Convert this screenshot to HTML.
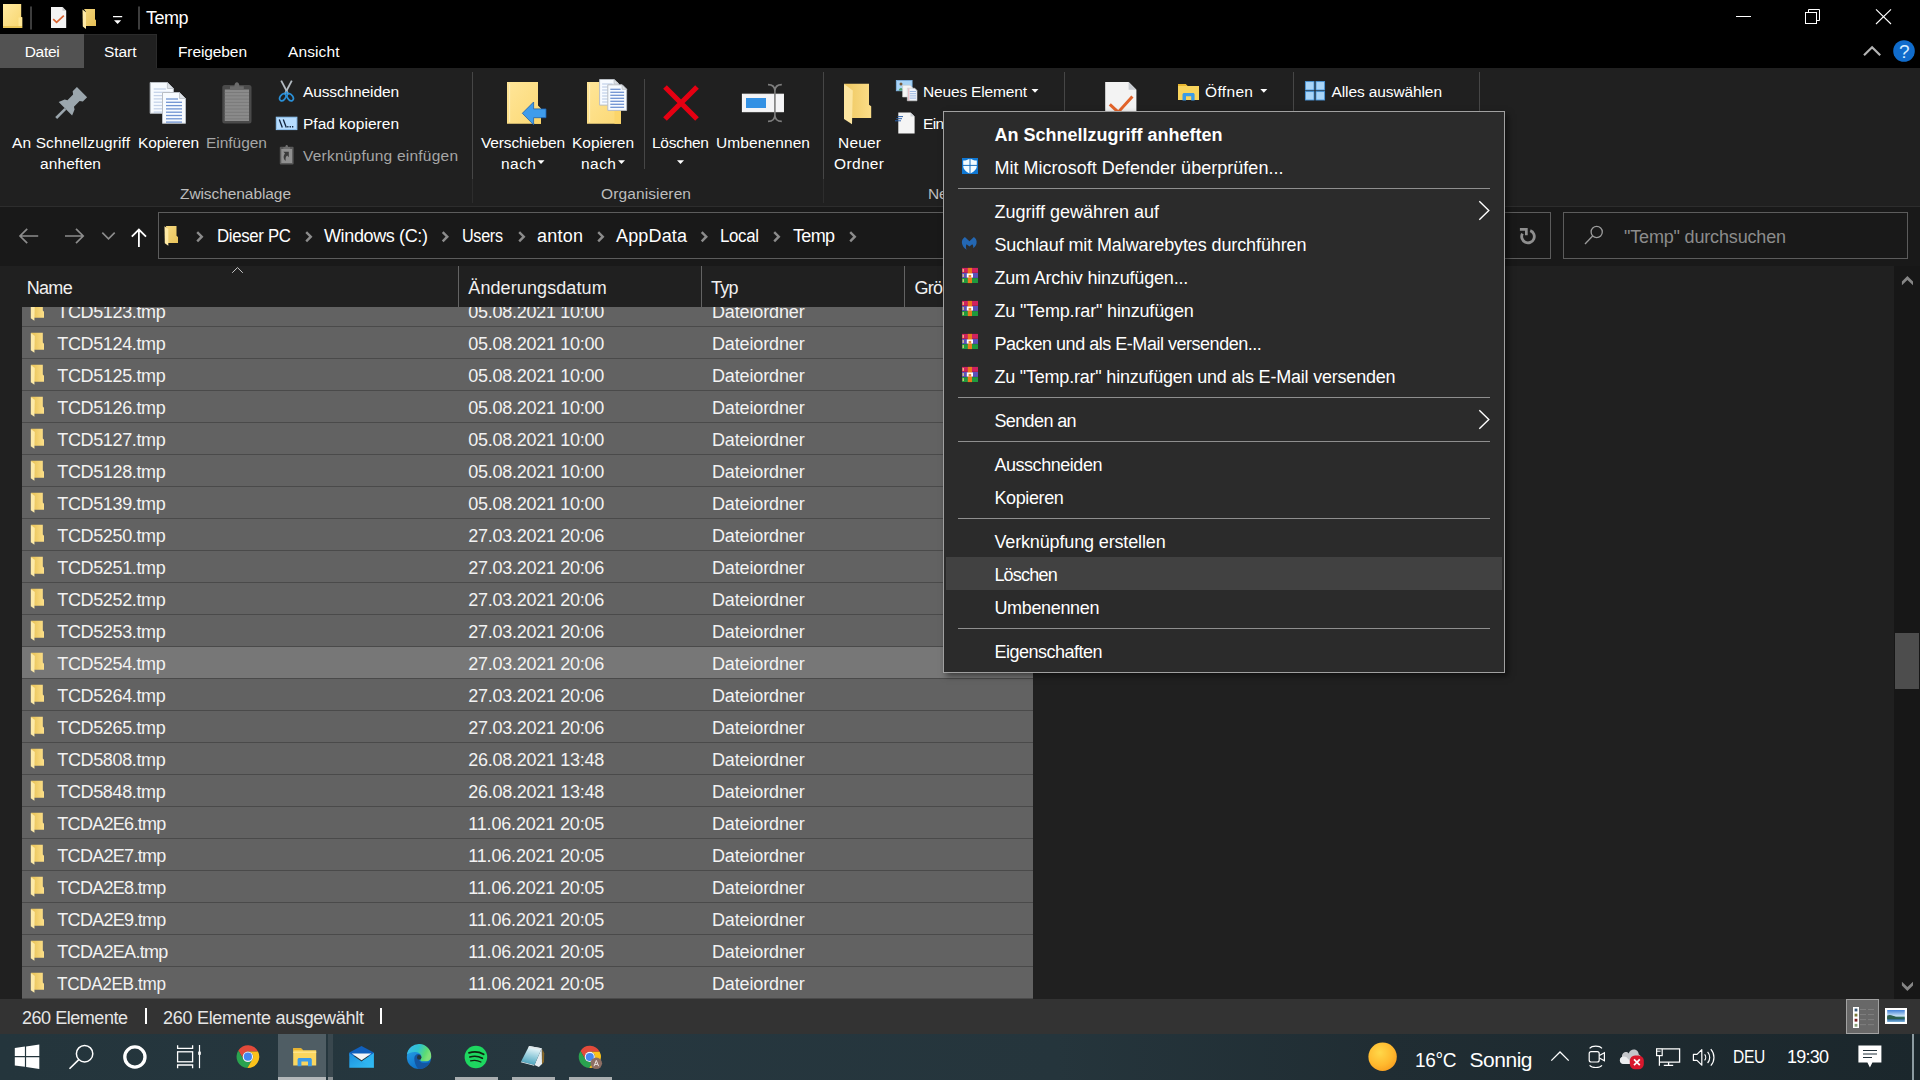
<!DOCTYPE html>
<html lang="de"><head><meta charset="utf-8"><title>Temp</title>
<style>html,body{margin:0;padding:0}body{width:1920px;height:1080px;position:relative;overflow:hidden;background:#202020;font-family:'Liberation Sans',sans-serif;}svg{overflow:visible}</style></head>
<body>
<div style="position:absolute;left:0px;top:0px;width:1920px;height:34px;background:#000;"></div>
<div style="position:absolute;left:0px;top:34px;width:1920px;height:34px;background:#000;"></div>
<div style="position:absolute;left:0px;top:34px;width:84px;height:34px;background:#525252;"></div>
<div style="position:absolute;left:84px;top:34px;width:73px;height:34px;background:#202020;"></div>
<div style="position:absolute;left:84px;top:34px;width:73px;height:1px;background:#2b2b2b;"></div>
<div style="position:absolute;left:156px;top:34px;width:1px;height:34px;background:#2b2b2b;"></div>
<div style="position:absolute;left:0px;top:68px;width:1920px;height:138px;background:#202020;"></div>
<div style="position:absolute;left:0px;top:206px;width:1920px;height:60px;background:#191919;"></div>
<div style="position:absolute;left:0px;top:266px;width:1920px;height:733px;background:#202020;"></div>
<div style="position:absolute;left:1894px;top:266px;width:26px;height:733px;background:#171717;"></div>
<div style="position:absolute;left:0px;top:999px;width:1920px;height:35px;background:#333333;"></div>
<div style="position:absolute;left:0px;top:1034px;width:1920px;height:46px;background:#21313a;background:linear-gradient(90deg,#24353c 0%,#26373f 30%,#25353c 55%,#202d33 72%,#1b272c 100%);"></div>
<svg style="position:absolute;left:3px;top:4px;" width="20" height="25" viewBox="0 0 20 25"><defs><linearGradient id="tf" x1="0" y1="0" x2="1" y2="1"><stop offset="0" stop-color="#ffe9a0"/><stop offset="1" stop-color="#f7d56d"/></linearGradient></defs><path d="M0 0H18.2V13H19.2V24H0Z" fill="url(#tf)"/><path d="M15.5 13.5H19.2V22H15.5Z" fill="#ffe794"/><path d="M0 22H19.2V24H0Z" fill="#e9c558"/></svg>
<div style="position:absolute;left:29.5px;top:6px;width:2.6px;height:23.5px;box-sizing:border-box;border:1px solid #3d3d3d;border-radius:1.3px"></div>
<div style="position:absolute;left:137.5px;top:6px;width:2.6px;height:23.5px;box-sizing:border-box;border:1px solid #3d3d3d;border-radius:1.3px"></div>
<svg style="position:absolute;left:51px;top:7px;" width="16" height="22" viewBox="0 0 16 22"><path d="M0 0H11.5L15.2 3.8V21H0Z" fill="#f3f3f3"/><path d="M11.5 0V3.8H15.2Z" fill="#c9c9c9"/><path d="M2.2 12.2L5.6 15.4L12.8 8.6" fill="none" stroke="#d9622f" stroke-width="1.7"/></svg>
<svg style="position:absolute;left:82px;top:9px;" width="15" height="21" viewBox="0 0 15 21"><defs><linearGradient id="sf" x1="0" y1="0" x2="1" y2="1"><stop offset="0" stop-color="#f3d67c"/><stop offset="1" stop-color="#e6bf55"/></linearGradient></defs><path d="M2 0H13V10.2L14 11.2V17H4V3Z" fill="url(#sf)"/><path d="M0.5 0.5L4 3.2V20L0.8 17.5Z" fill="#ffe9a3"/></svg>
<svg style="position:absolute;left:113px;top:16px;" width="10" height="9" viewBox="0 0 10 9"><path d="M0 0H9.2V1.2H0Z M1 4.2H8.2L4.6 8Z" fill="#fff"/></svg>
<span style="position:absolute;left:146px;top:9.00px;font-size:18px;line-height:1;letter-spacing:-0.539px;color:#fff;white-space:pre;">Temp</span>
<svg style="position:absolute;left:0;top:0" width="1920" height="70"><path d="M1736 16.5H1751" stroke="#fff" stroke-width="1"/><path d="M1808.5 12.5V9.5H1819.5V20.5H1816.5" fill="none" stroke="#fff" stroke-width="1"/><rect x="1805.5" y="12.5" width="11" height="11" fill="none" stroke="#fff" stroke-width="1"/><path d="M1876 9.3L1891 24M1891 9.3L1876 24" stroke="#fff" stroke-width="1.1"/><path d="M1864 55.2L1872.1 47.2L1880.2 55.2" fill="none" stroke="#b4b4b4" stroke-width="2.2"/><circle cx="1904" cy="51" r="10.8" fill="#106ccc"/></svg>
<span style="position:absolute;left:1898.9px;top:42.00px;font-size:19px;line-height:1;letter-spacing:-0.317px;color:#d6ecff;white-space:pre;">?</span>
<span style="position:absolute;left:24.7px;top:44.00px;font-size:15.5px;line-height:1;letter-spacing:-0.297px;color:#fff;white-space:pre;">Datei</span>
<span style="position:absolute;left:104px;top:44.00px;font-size:15.5px;line-height:1;letter-spacing:-0.059px;color:#fff;white-space:pre;">Start</span>
<span style="position:absolute;left:178px;top:44.00px;font-size:15.5px;line-height:1;letter-spacing:-0.100px;color:#fff;white-space:pre;">Freigeben</span>
<span style="position:absolute;left:288px;top:44.00px;font-size:15.5px;line-height:1;letter-spacing:0.109px;color:#fff;white-space:pre;">Ansicht</span>
<span style="position:absolute;left:12px;top:135.00px;font-size:15.5px;line-height:1;letter-spacing:0.123px;color:#fff;white-space:pre;">An Schnellzugriff</span>
<span style="position:absolute;left:40px;top:156.00px;font-size:15.5px;line-height:1;letter-spacing:0.094px;color:#fff;white-space:pre;">anheften</span>
<span style="position:absolute;left:138px;top:135.00px;font-size:15.5px;line-height:1;letter-spacing:-0.150px;color:#fff;white-space:pre;">Kopieren</span>
<span style="position:absolute;left:206px;top:135.00px;font-size:15.5px;line-height:1;letter-spacing:-0.029px;color:#a6a6a6;white-space:pre;">Einfügen</span>
<span style="position:absolute;left:303px;top:84.00px;font-size:15.5px;line-height:1;letter-spacing:-0.125px;color:#fff;white-space:pre;">Ausschneiden</span>
<span style="position:absolute;left:303px;top:116.00px;font-size:15.5px;line-height:1;letter-spacing:0.029px;color:#fff;white-space:pre;">Pfad kopieren</span>
<span style="position:absolute;left:303px;top:148.00px;font-size:15.5px;line-height:1;letter-spacing:0.220px;color:#a6a6a6;white-space:pre;">Verknüpfung einfügen</span>
<span style="position:absolute;left:180px;top:186.00px;font-size:15.5px;line-height:1;letter-spacing:-0.078px;color:#bdbdbd;white-space:pre;">Zwischenablage</span>
<span style="position:absolute;left:481px;top:135.00px;font-size:15.5px;line-height:1;letter-spacing:-0.131px;color:#fff;white-space:pre;">Verschieben</span>
<span style="position:absolute;left:501px;top:156.00px;font-size:15.5px;line-height:1;letter-spacing:0.458px;color:#fff;white-space:pre;">nach</span>
<span style="position:absolute;left:572px;top:135.00px;font-size:15.5px;line-height:1;letter-spacing:-0.007px;color:#fff;white-space:pre;">Kopieren</span>
<span style="position:absolute;left:581px;top:156.00px;font-size:15.5px;line-height:1;letter-spacing:0.458px;color:#fff;white-space:pre;">nach</span>
<span style="position:absolute;left:652px;top:135.00px;font-size:15.5px;line-height:1;letter-spacing:-0.268px;color:#fff;white-space:pre;">Löschen</span>
<span style="position:absolute;left:716px;top:135.00px;font-size:15.5px;line-height:1;letter-spacing:0.102px;color:#fff;white-space:pre;">Umbenennen</span>
<span style="position:absolute;left:601px;top:186.00px;font-size:15.5px;line-height:1;letter-spacing:0.114px;color:#bdbdbd;white-space:pre;">Organisieren</span>
<span style="position:absolute;left:838px;top:135.00px;font-size:15.5px;line-height:1;letter-spacing:0.195px;color:#fff;white-space:pre;">Neuer</span>
<span style="position:absolute;left:834px;top:156.00px;font-size:15.5px;line-height:1;letter-spacing:0.350px;color:#fff;white-space:pre;">Ordner</span>
<span style="position:absolute;left:923px;top:84.00px;font-size:15.5px;line-height:1;letter-spacing:-0.165px;color:#fff;white-space:pre;">Neues Element</span>
<span style="position:absolute;left:923px;top:116.00px;font-size:15.5px;line-height:1;letter-spacing:-0.703px;color:#fff;white-space:pre;">Ein</span>
<span style="position:absolute;left:928px;top:186.00px;font-size:15.5px;line-height:1;letter-spacing:-0.258px;color:#bdbdbd;white-space:pre;">Neu</span>
<span style="position:absolute;left:1205px;top:84.00px;font-size:15.5px;line-height:1;letter-spacing:0.347px;color:#fff;white-space:pre;">Öffnen</span>
<span style="position:absolute;left:1331.5px;top:84.00px;font-size:15.5px;line-height:1;letter-spacing:-0.108px;color:#fff;white-space:pre;">Alles auswählen</span>
<svg style="position:absolute;left:0;top:0" width="100" height="130"><polygon points="58.67,102.09 72.11,115.53 74.58,109.51 73.95,106.76 79.61,101.10 82.86,101.52 87.10,97.28 76.92,87.10 72.68,91.34 73.10,94.59 67.44,100.25 64.69,99.62" fill="#9ba6ad"/><polygon points="55.28,117.08 57.12,118.92 66.31,109.73 64.47,107.89" fill="#9ba6ad"/></svg>
<svg style="position:absolute;left:0;top:0" width="260" height="130"><path d="M150.2 82.5H167.39999999999998L173.39999999999998 88.5V113.3H150.2Z" fill="#f7fbff" stroke="#b9bec4" stroke-width="1"/><path d="M167.39999999999998 82.5V88.5H173.39999999999998Z" fill="#dfe3e8" stroke="#b9bec4" stroke-width="0.8"/><path d="M153.7 89.00H165.89999999999998" stroke="#c5d3ea" stroke-width="1.3"/><path d="M153.7 92.30H169.89999999999998" stroke="#c5d3ea" stroke-width="1.3"/><path d="M153.7 95.60H169.89999999999998" stroke="#c5d3ea" stroke-width="1.3"/><path d="M153.7 98.90H169.89999999999998" stroke="#c5d3ea" stroke-width="1.3"/><path d="M153.7 102.20H169.89999999999998" stroke="#c5d3ea" stroke-width="1.3"/><path d="M153.7 105.50H169.89999999999998" stroke="#c5d3ea" stroke-width="1.3"/><path d="M153.7 108.80H169.89999999999998" stroke="#c5d3ea" stroke-width="1.3"/><path d="M153.7 112.10H169.89999999999998" stroke="#c5d3ea" stroke-width="1.3"/><path d="M162.5 92.5H179.5L185.5 98.5V123.3H162.5Z" fill="#f7fbff" stroke="#b9bec4" stroke-width="1"/><path d="M179.5 92.5V98.5H185.5Z" fill="#dfe3e8" stroke="#b9bec4" stroke-width="0.8"/><path d="M166.0 99.00H178.0" stroke="#6f93d2" stroke-width="1.3"/><path d="M166.0 102.30H182.0" stroke="#6f93d2" stroke-width="1.3"/><path d="M166.0 105.60H182.0" stroke="#6f93d2" stroke-width="1.3"/><path d="M166.0 108.90H182.0" stroke="#6f93d2" stroke-width="1.3"/><path d="M166.0 112.20H182.0" stroke="#6f93d2" stroke-width="1.3"/><path d="M166.0 115.50H182.0" stroke="#6f93d2" stroke-width="1.3"/><path d="M166.0 118.80H182.0" stroke="#6f93d2" stroke-width="1.3"/><path d="M166.0 122.10H182.0" stroke="#6f93d2" stroke-width="1.3"/></svg>
<svg style="position:absolute;left:0;top:0" width="260" height="130"><rect x="222.3" y="85" width="29.2" height="38.6" rx="2.5" fill="#4a4a4a"/><rect x="224.8" y="89.5" width="24.2" height="31.5" fill="#8a8a8a"/><path d="M224.8 92.5H249" stroke="#7a7a7a" stroke-width="1"/><path d="M224.8 95.8H249" stroke="#7a7a7a" stroke-width="1"/><path d="M224.8 99.1H249" stroke="#7a7a7a" stroke-width="1"/><path d="M224.8 102.4H249" stroke="#7a7a7a" stroke-width="1"/><path d="M224.8 105.7H249" stroke="#7a7a7a" stroke-width="1"/><path d="M224.8 109.0H249" stroke="#7a7a7a" stroke-width="1"/><path d="M224.8 112.3H249" stroke="#7a7a7a" stroke-width="1"/><path d="M224.8 115.6H249" stroke="#7a7a7a" stroke-width="1"/><path d="M224.8 118.9H249" stroke="#7a7a7a" stroke-width="1"/><path d="M230 89.8V86.2H234.4C234.4 83.8 235.6 82.3 236.9 82.3C238.2 82.3 239.4 83.8 239.4 86.2H243.8V89.8Z" fill="#6a6a6a"/></svg>
<svg style="position:absolute;left:0;top:0" width="320" height="180"><path d="M281.2 80.6L288.2 94" stroke="#b4bcc3" stroke-width="1.8" fill="none"/><path d="M291.8 80.6L284.8 94" stroke="#b4bcc3" stroke-width="1.8" fill="none"/><ellipse cx="282.8" cy="97.3" rx="2.6" ry="3.9" transform="rotate(35 282.8 97.3)" fill="none" stroke="#2a90d8" stroke-width="1.7"/><ellipse cx="290.2" cy="97.3" rx="2.6" ry="3.9" transform="rotate(-35 290.2 97.3)" fill="none" stroke="#2a90d8" stroke-width="1.7"/><circle cx="286.5" cy="92.6" r="1.3" fill="#2a90d8"/><rect x="276.3" y="117.2" width="20.6" height="12.4" fill="#b6dcfe" stroke="#8fc4f2" stroke-width="1"/><path d="M279.3 119.5L282.3 127.5M283.3 119.5L286.3 127.5" stroke="#10233d" stroke-width="1.3"/><path d="M287.2 126.8h1.3M289.6 126.8h1.3M292 126.8h1.3" stroke="#10233d" stroke-width="1.4"/><rect x="279.8" y="146.8" width="13.8" height="17.6" rx="1" fill="#5a5a5a"/><rect x="281.3" y="149" width="10.8" height="14" fill="#8f8f8f"/><path d="M283.3 149V147H285.4C285.4 145.6 286 145 286.7 145C287.4 145 288 145.6 288 147H290.1V149Z" fill="#6e6e6e"/><path d="M283.4 151.8H288.8V157.2L287.2 155.6C285.6 157 285.2 158.6 285.9 160.8C283.2 159 283 156.2 285 153.4Z" fill="#3a3a3a"/></svg>
<svg style="position:absolute;left:0;top:0" width="700" height="130"><defs><linearGradient id="fg" x1="0" y1="0" x2="1" y2="1"><stop offset="0" stop-color="#ffe699"/><stop offset="1" stop-color="#fbd874"/></linearGradient></defs><path d="M507 82H538V105.5L541 108.5V123.8H507Z" fill="url(#fg)"/><path d="M509.6 84V122" stroke="#fff0bb" stroke-width="1"/><path d="M534.5 108.5H541V123.8H534.5Z" fill="#fbd56a"/><path d="M522.3 113.3L533.6 102V108.9H546V117.7H533.6V124.8Z" fill="#3f9ceb" stroke="#1d61ad" stroke-width="0.8"/><path d="M587 82H618V105.5L621 108.5V123.8H587Z" fill="url(#fg)"/><path d="M589.6 84V122" stroke="#fff0bb" stroke-width="1"/><path d="M614.5 108.5H621V123.8H614.5Z" fill="#fbd56a"/><path d="M599.6 79.5H614.1L618.6 84.0V105.1H599.6Z" fill="#f7fbff" stroke="#b9bec4" stroke-width="1"/><path d="M614.1 79.5V84.0H618.6Z" fill="#dfe3e8" stroke="#b9bec4" stroke-width="0.8"/><path d="M602.1 84.00H612.6" stroke="#c5d3ea" stroke-width="1.3"/><path d="M602.1 87.00H616.1" stroke="#c5d3ea" stroke-width="1.3"/><path d="M602.1 90.00H616.1" stroke="#c5d3ea" stroke-width="1.3"/><path d="M602.1 93.00H616.1" stroke="#c5d3ea" stroke-width="1.3"/><path d="M602.1 96.00H616.1" stroke="#c5d3ea" stroke-width="1.3"/><path d="M602.1 99.00H616.1" stroke="#c5d3ea" stroke-width="1.3"/><path d="M602.1 102.00H616.1" stroke="#c5d3ea" stroke-width="1.3"/><path d="M607.8 84.8H622.0999999999999L626.5999999999999 89.3V110.4H607.8Z" fill="#f7fbff" stroke="#b9bec4" stroke-width="1"/><path d="M622.0999999999999 84.8V89.3H626.5999999999999Z" fill="#dfe3e8" stroke="#b9bec4" stroke-width="0.8"/><path d="M610.3 89.30H620.5999999999999" stroke="#6f93d2" stroke-width="1.3"/><path d="M610.3 92.30H624.0999999999999" stroke="#6f93d2" stroke-width="1.3"/><path d="M610.3 95.30H624.0999999999999" stroke="#6f93d2" stroke-width="1.3"/><path d="M610.3 98.30H624.0999999999999" stroke="#6f93d2" stroke-width="1.3"/><path d="M610.3 101.30H624.0999999999999" stroke="#6f93d2" stroke-width="1.3"/><path d="M610.3 104.30H624.0999999999999" stroke="#6f93d2" stroke-width="1.3"/><path d="M610.3 107.30H624.0999999999999" stroke="#6f93d2" stroke-width="1.3"/></svg>
<svg style="position:absolute;left:0;top:0" width="900" height="140"><path d="M665 87L697 119M697 87L665 119" stroke="#e60012" stroke-width="5.2"/><rect x="742.4" y="94.2" width="41" height="17.5" fill="#f4f4f6" stroke="#fff" stroke-width="1"/><rect x="746" y="98" width="20" height="10" fill="#3391e4"/><path d="M768 84.6C772.5 84.6 774.9 87 774.9 91V115C774.9 119 772.5 121.4 768 121.4M781.8 84.6C777.3 84.6 774.9 87 774.9 91M774.9 115C774.9 119 777.3 121.4 781.8 121.4" fill="none" stroke="#7d7d7d" stroke-width="1.6"/><defs><linearGradient id="nf" x1="0" y1="0" x2="1" y2="0"><stop offset="0" stop-color="#eec760"/><stop offset="1" stop-color="#fbdd88"/></linearGradient></defs><path d="M844 83.8H869V104.7L871.2 106.3V118H851Z" fill="url(#nf)"/><path d="M844 84L852.8 90.6L852 124.3L844 118.9Z" fill="#fce5a0"/></svg>
<svg style="position:absolute;left:0;top:0" width="960" height="140"><rect x="896.3" y="80.5" width="15.8" height="10.3" fill="#a9d4f6" stroke="#7fb5e6" stroke-width="0.8"/><circle cx="901" cy="84" r="1.5" fill="#7a5a3a"/><path d="M898.8 90.5C898.8 87 903.2 87 903.2 90.5Z" fill="#4da06a"/><path d="M902.6 85.2H910L912.4 87.6V97H902.6Z" fill="#f5f5f5" stroke="#c9c9c9" stroke-width="0.6"/><path d="M907.3 88.2H914.8L917 90.4V100.8H907.3Z" fill="#eef3fb" stroke="#c9c9c9" stroke-width="0.6"/><path d="M908.8 88.5V100.5" stroke="#e79aa0" stroke-width="0.8"/><path d="M909.8 91.5H916" stroke="#9db8df" stroke-width="1"/><path d="M909.8 93.7H916" stroke="#9db8df" stroke-width="1"/><path d="M909.8 95.9H916" stroke="#9db8df" stroke-width="1"/><path d="M909.8 98.1H916" stroke="#9db8df" stroke-width="1"/><path d="M898.3 112.5H910.5L914.6 116.6V133.5H898.3Z" fill="#f5f5f5"/><path d="M910.5 112.5V116.6H914.6Z" fill="#cfd3d8"/><path d="M897.5 116.6H903M896.3 118.7H902M895 120.8H901" stroke="#2a5fa8" stroke-width="1"/></svg>
<svg style="position:absolute;left:0;top:0" width="1500" height="210"><path d="M537.5 160.3h7l-3.5 3.8z" fill="#fff"/><path d="M618 160.3h7l-3.5 3.8z" fill="#fff"/><path d="M677 160.3h7l-3.5 3.8z" fill="#fff"/><path d="M1031.5 89h7l-3.5 3.8z" fill="#fff"/><path d="M1260.3 89h7l-3.5 3.8z" fill="#fff"/><path d="M1105.2 82H1128.6L1136.4 89.8V112H1105.2Z" fill="#f3f3f3"/><path d="M1128.6 82V89.8H1136.4Z" fill="#c9cdd2"/><path d="M1109.8 104.3L1118.2 112.2L1132.4 96.6" fill="none" stroke="#e2632a" stroke-width="3"/><path d="M1178 84H1185.5L1187.5 86H1199V100H1178Z" fill="#f9d45c"/><path d="M1178 84H1185.5L1187.5 86H1178Z" fill="#e8b62f"/><path d="M1182.5 100.6V94.6C1182.5 93.6 1183.3 93 1184.2 93H1193C1193.9 93 1194.6 93.6 1194.6 94.6V100.6H1191.2V96.2H1186V100.6Z" fill="#3b9be6"/><rect x="1305.4" y="81.6" width="8.6" height="8.4" fill="#a9d5f8" stroke="#4a98de" stroke-width="0.9"/><rect x="1305.4" y="91.6" width="8.6" height="8.4" fill="#a9d5f8" stroke="#4a98de" stroke-width="0.9"/><rect x="1316" y="81.6" width="8.6" height="8.4" fill="#a9d5f8" stroke="#4a98de" stroke-width="0.9"/><rect x="1316" y="91.6" width="8.6" height="8.4" fill="#a9d5f8" stroke="#4a98de" stroke-width="0.9"/></svg>
<div style="position:absolute;left:472px;top:72px;width:1px;height:107px;background:#464646;"></div>
<div style="position:absolute;left:472px;top:179px;width:1px;height:24px;background:#2d2d2d;"></div>
<div style="position:absolute;left:823px;top:72px;width:1px;height:107px;background:#464646;"></div>
<div style="position:absolute;left:823px;top:179px;width:1px;height:24px;background:#2d2d2d;"></div>
<div style="position:absolute;left:1064px;top:72px;width:1px;height:107px;background:#464646;"></div>
<div style="position:absolute;left:1064px;top:179px;width:1px;height:24px;background:#2d2d2d;"></div>
<div style="position:absolute;left:1293px;top:72px;width:1px;height:107px;background:#464646;"></div>
<div style="position:absolute;left:1293px;top:179px;width:1px;height:24px;background:#2d2d2d;"></div>
<div style="position:absolute;left:1479px;top:72px;width:1px;height:107px;background:#464646;"></div>
<div style="position:absolute;left:1479px;top:179px;width:1px;height:24px;background:#2d2d2d;"></div>
<div style="position:absolute;left:644px;top:79px;width:1px;height:90px;background:#464646;"></div>
<div style="position:absolute;left:158px;top:212px;width:1393px;height:47px;background:#191919;box-sizing:border-box;border:1px solid #5c5c5c;"></div>
<div style="position:absolute;left:1563px;top:212px;width:345px;height:47px;background:#191919;box-sizing:border-box;border:1px solid #5c5c5c;"></div>
<div style="position:absolute;left:0px;top:206px;width:1920px;height:1px;background:#2d2d2d;"></div>
<svg style="position:absolute;left:0;top:0" width="1920" height="270"><path d="M38.2 236H20.2M27.2 228.8L20 236L27.2 243.2" fill="none" stroke="#8c8c8c" stroke-width="1.7"/><path d="M65 236H83M76 228.8L83.2 236L76 243.2" fill="none" stroke="#8c8c8c" stroke-width="1.7"/><path d="M102.3 232.6L108.5 238.8L114.7 232.6" fill="none" stroke="#8c8c8c" stroke-width="1.6"/><path d="M138.9 247V229.6M131.8 236.6L138.9 229.5L146 236.6" fill="none" stroke="#fff" stroke-width="1.8"/><defs><linearGradient id="af" x1="0" y1="0" x2="1" y2="1"><stop offset="0" stop-color="#f6d981"/><stop offset="1" stop-color="#e9c35a"/></linearGradient></defs><path d="M166 226H176.5V235.8L178 237V243H168Z" fill="url(#af)"/><path d="M164.5 226.2L168.3 229V245.8L164.8 243.2Z" fill="#ffeaa6"/><path d="M197.2 232.1L201.8 236.7L197.2 241.3" fill="none" stroke="#8c8c8c" stroke-width="2.4"/><path d="M306.2 232.1L310.8 236.7L306.2 241.3" fill="none" stroke="#8c8c8c" stroke-width="2.4"/><path d="M442.7 232.1L447.3 236.7L442.7 241.3" fill="none" stroke="#8c8c8c" stroke-width="2.4"/><path d="M519.2 232.1L523.8 236.7L519.2 241.3" fill="none" stroke="#8c8c8c" stroke-width="2.4"/><path d="M598.2 232.1L602.8 236.7L598.2 241.3" fill="none" stroke="#8c8c8c" stroke-width="2.4"/><path d="M701.7 232.1L706.3 236.7L701.7 241.3" fill="none" stroke="#8c8c8c" stroke-width="2.4"/><path d="M774.2 232.1L778.8 236.7L774.2 241.3" fill="none" stroke="#8c8c8c" stroke-width="2.4"/><path d="M850.2 232.1L854.8 236.7L850.2 241.3" fill="none" stroke="#8c8c8c" stroke-width="2.4"/><path d="M1530.2 230.6A6.3 6.3 0 1 1 1522.4 233.6" fill="none" stroke="#8f8f8f" stroke-width="2.8"/><path d="M1519.9 228H1527.7V235.2H1525V230.7H1519.9Z" fill="#8f8f8f"/><circle cx="1596.7" cy="232" r="5.6" fill="none" stroke="#9c9c9c" stroke-width="1.3"/><path d="M1592.6 236L1585 244" stroke="#9c9c9c" stroke-width="1.3"/></svg>
<span style="position:absolute;left:217px;top:227.00px;font-size:18px;line-height:1;letter-spacing:-0.350px;color:#fff;white-space:pre;transform:scaleX(0.9340);transform-origin:0 0;">Dieser PC</span>
<span style="position:absolute;left:324px;top:227.00px;font-size:18px;line-height:1;letter-spacing:-0.365px;color:#fff;white-space:pre;">Windows (C:)</span>
<span style="position:absolute;left:462px;top:227.00px;font-size:18px;line-height:1;letter-spacing:-0.350px;color:#fff;white-space:pre;transform:scaleX(0.8988);transform-origin:0 0;">Users</span>
<span style="position:absolute;left:537px;top:227.00px;font-size:18px;line-height:1;letter-spacing:0.238px;color:#fff;white-space:pre;">anton</span>
<span style="position:absolute;left:616px;top:227.00px;font-size:18px;line-height:1;letter-spacing:0.156px;color:#fff;white-space:pre;">AppData</span>
<span style="position:absolute;left:720px;top:227.00px;font-size:18px;line-height:1;letter-spacing:-0.350px;color:#fff;white-space:pre;transform:scaleX(0.9368);transform-origin:0 0;">Local</span>
<span style="position:absolute;left:793px;top:227.00px;font-size:18px;line-height:1;letter-spacing:-0.672px;color:#fff;white-space:pre;">Temp</span>
<span style="position:absolute;left:1624px;top:228.00px;font-size:18px;line-height:1;letter-spacing:-0.169px;color:#8c8c8c;white-space:pre;">"Temp" durchsuchen</span>
<span style="position:absolute;left:26.7px;top:279.00px;font-size:18px;line-height:1;letter-spacing:-0.672px;color:#f0f0f0;white-space:pre;">Name</span>
<span style="position:absolute;left:468.3px;top:279.00px;font-size:18px;line-height:1;letter-spacing:0.100px;color:#f0f0f0;white-space:pre;">Änderungsdatum</span>
<span style="position:absolute;left:711px;top:279.00px;font-size:18px;line-height:1;letter-spacing:-0.808px;color:#f0f0f0;white-space:pre;">Typ</span>
<span style="position:absolute;left:914.5px;top:279.00px;font-size:18px;line-height:1;letter-spacing:-0.758px;color:#f0f0f0;white-space:pre;">Grö</span>
<div style="position:absolute;left:458px;top:266px;width:1px;height:41px;background:#636363;"></div>
<div style="position:absolute;left:701px;top:266px;width:1px;height:41px;background:#636363;"></div>
<div style="position:absolute;left:904px;top:266px;width:1px;height:41px;background:#636363;"></div>
<div style="position:absolute;left:0;top:307px;width:1040px;height:692px;overflow:hidden">
<div style="position:absolute;left:22px;top:0px;width:1011px;height:692px;background:#4a4a4a;"></div>
<svg width="0" height="0" style="position:absolute"><defs><linearGradient id="rf" x1="0" y1="0" x2="1" y2="0"><stop offset="0.25" stop-color="#ecc861"/><stop offset="1" stop-color="#fde08a"/></linearGradient></defs></svg>
<div style="position:absolute;left:22px;top:-12px;width:1011px;height:31px;background:#626262;"></div>
<svg style="position:absolute;left:30px;top:-7px;" width="15" height="22" viewBox="0 0 15 22"><path d="M1 0.8H12.8V10.6L14 11.8V17.7H4.2Z" fill="url(#rf)"/><path d="M0.8 1L4.8 4.1L4.4 20.8L0.8 18.3Z" fill="#fdeaa8"/></svg>
<span style="position:absolute;left:57.3px;top:-4.00px;font-size:18px;line-height:1;letter-spacing:-0.365px;color:#f2f2f2;white-space:pre;">TCD5123.tmp</span>
<span style="position:absolute;left:468.3px;top:-4.00px;font-size:18px;line-height:1;letter-spacing:-0.276px;color:#f2f2f2;white-space:pre;">05.08.2021 10:00</span>
<span style="position:absolute;left:712px;top:-4.00px;font-size:18px;line-height:1;letter-spacing:-0.136px;color:#f2f2f2;white-space:pre;">Dateiordner</span>
<div style="position:absolute;left:22px;top:20px;width:1011px;height:31px;background:#626262;"></div>
<svg style="position:absolute;left:30px;top:25px;" width="15" height="22" viewBox="0 0 15 22"><path d="M1 0.8H12.8V10.6L14 11.8V17.7H4.2Z" fill="url(#rf)"/><path d="M0.8 1L4.8 4.1L4.4 20.8L0.8 18.3Z" fill="#fdeaa8"/></svg>
<span style="position:absolute;left:57.3px;top:28.00px;font-size:18px;line-height:1;letter-spacing:-0.365px;color:#f2f2f2;white-space:pre;">TCD5124.tmp</span>
<span style="position:absolute;left:468.3px;top:28.00px;font-size:18px;line-height:1;letter-spacing:-0.276px;color:#f2f2f2;white-space:pre;">05.08.2021 10:00</span>
<span style="position:absolute;left:712px;top:28.00px;font-size:18px;line-height:1;letter-spacing:-0.136px;color:#f2f2f2;white-space:pre;">Dateiordner</span>
<div style="position:absolute;left:22px;top:52px;width:1011px;height:31px;background:#626262;"></div>
<svg style="position:absolute;left:30px;top:57px;" width="15" height="22" viewBox="0 0 15 22"><path d="M1 0.8H12.8V10.6L14 11.8V17.7H4.2Z" fill="url(#rf)"/><path d="M0.8 1L4.8 4.1L4.4 20.8L0.8 18.3Z" fill="#fdeaa8"/></svg>
<span style="position:absolute;left:57.3px;top:60.00px;font-size:18px;line-height:1;letter-spacing:-0.365px;color:#f2f2f2;white-space:pre;">TCD5125.tmp</span>
<span style="position:absolute;left:468.3px;top:60.00px;font-size:18px;line-height:1;letter-spacing:-0.276px;color:#f2f2f2;white-space:pre;">05.08.2021 10:00</span>
<span style="position:absolute;left:712px;top:60.00px;font-size:18px;line-height:1;letter-spacing:-0.136px;color:#f2f2f2;white-space:pre;">Dateiordner</span>
<div style="position:absolute;left:22px;top:84px;width:1011px;height:31px;background:#626262;"></div>
<svg style="position:absolute;left:30px;top:89px;" width="15" height="22" viewBox="0 0 15 22"><path d="M1 0.8H12.8V10.6L14 11.8V17.7H4.2Z" fill="url(#rf)"/><path d="M0.8 1L4.8 4.1L4.4 20.8L0.8 18.3Z" fill="#fdeaa8"/></svg>
<span style="position:absolute;left:57.3px;top:92.00px;font-size:18px;line-height:1;letter-spacing:-0.365px;color:#f2f2f2;white-space:pre;">TCD5126.tmp</span>
<span style="position:absolute;left:468.3px;top:92.00px;font-size:18px;line-height:1;letter-spacing:-0.276px;color:#f2f2f2;white-space:pre;">05.08.2021 10:00</span>
<span style="position:absolute;left:712px;top:92.00px;font-size:18px;line-height:1;letter-spacing:-0.136px;color:#f2f2f2;white-space:pre;">Dateiordner</span>
<div style="position:absolute;left:22px;top:116px;width:1011px;height:31px;background:#626262;"></div>
<svg style="position:absolute;left:30px;top:121px;" width="15" height="22" viewBox="0 0 15 22"><path d="M1 0.8H12.8V10.6L14 11.8V17.7H4.2Z" fill="url(#rf)"/><path d="M0.8 1L4.8 4.1L4.4 20.8L0.8 18.3Z" fill="#fdeaa8"/></svg>
<span style="position:absolute;left:57.3px;top:124.00px;font-size:18px;line-height:1;letter-spacing:-0.365px;color:#f2f2f2;white-space:pre;">TCD5127.tmp</span>
<span style="position:absolute;left:468.3px;top:124.00px;font-size:18px;line-height:1;letter-spacing:-0.276px;color:#f2f2f2;white-space:pre;">05.08.2021 10:00</span>
<span style="position:absolute;left:712px;top:124.00px;font-size:18px;line-height:1;letter-spacing:-0.136px;color:#f2f2f2;white-space:pre;">Dateiordner</span>
<div style="position:absolute;left:22px;top:148px;width:1011px;height:31px;background:#626262;"></div>
<svg style="position:absolute;left:30px;top:153px;" width="15" height="22" viewBox="0 0 15 22"><path d="M1 0.8H12.8V10.6L14 11.8V17.7H4.2Z" fill="url(#rf)"/><path d="M0.8 1L4.8 4.1L4.4 20.8L0.8 18.3Z" fill="#fdeaa8"/></svg>
<span style="position:absolute;left:57.3px;top:156.00px;font-size:18px;line-height:1;letter-spacing:-0.365px;color:#f2f2f2;white-space:pre;">TCD5128.tmp</span>
<span style="position:absolute;left:468.3px;top:156.00px;font-size:18px;line-height:1;letter-spacing:-0.276px;color:#f2f2f2;white-space:pre;">05.08.2021 10:00</span>
<span style="position:absolute;left:712px;top:156.00px;font-size:18px;line-height:1;letter-spacing:-0.136px;color:#f2f2f2;white-space:pre;">Dateiordner</span>
<div style="position:absolute;left:22px;top:180px;width:1011px;height:31px;background:#626262;"></div>
<svg style="position:absolute;left:30px;top:185px;" width="15" height="22" viewBox="0 0 15 22"><path d="M1 0.8H12.8V10.6L14 11.8V17.7H4.2Z" fill="url(#rf)"/><path d="M0.8 1L4.8 4.1L4.4 20.8L0.8 18.3Z" fill="#fdeaa8"/></svg>
<span style="position:absolute;left:57.3px;top:188.00px;font-size:18px;line-height:1;letter-spacing:-0.365px;color:#f2f2f2;white-space:pre;">TCD5139.tmp</span>
<span style="position:absolute;left:468.3px;top:188.00px;font-size:18px;line-height:1;letter-spacing:-0.276px;color:#f2f2f2;white-space:pre;">05.08.2021 10:00</span>
<span style="position:absolute;left:712px;top:188.00px;font-size:18px;line-height:1;letter-spacing:-0.136px;color:#f2f2f2;white-space:pre;">Dateiordner</span>
<div style="position:absolute;left:22px;top:212px;width:1011px;height:31px;background:#626262;"></div>
<svg style="position:absolute;left:30px;top:217px;" width="15" height="22" viewBox="0 0 15 22"><path d="M1 0.8H12.8V10.6L14 11.8V17.7H4.2Z" fill="url(#rf)"/><path d="M0.8 1L4.8 4.1L4.4 20.8L0.8 18.3Z" fill="#fdeaa8"/></svg>
<span style="position:absolute;left:57.3px;top:220.00px;font-size:18px;line-height:1;letter-spacing:-0.365px;color:#f2f2f2;white-space:pre;">TCD5250.tmp</span>
<span style="position:absolute;left:468.3px;top:220.00px;font-size:18px;line-height:1;letter-spacing:-0.276px;color:#f2f2f2;white-space:pre;">27.03.2021 20:06</span>
<span style="position:absolute;left:712px;top:220.00px;font-size:18px;line-height:1;letter-spacing:-0.136px;color:#f2f2f2;white-space:pre;">Dateiordner</span>
<div style="position:absolute;left:22px;top:244px;width:1011px;height:31px;background:#626262;"></div>
<svg style="position:absolute;left:30px;top:249px;" width="15" height="22" viewBox="0 0 15 22"><path d="M1 0.8H12.8V10.6L14 11.8V17.7H4.2Z" fill="url(#rf)"/><path d="M0.8 1L4.8 4.1L4.4 20.8L0.8 18.3Z" fill="#fdeaa8"/></svg>
<span style="position:absolute;left:57.3px;top:252.00px;font-size:18px;line-height:1;letter-spacing:-0.365px;color:#f2f2f2;white-space:pre;">TCD5251.tmp</span>
<span style="position:absolute;left:468.3px;top:252.00px;font-size:18px;line-height:1;letter-spacing:-0.276px;color:#f2f2f2;white-space:pre;">27.03.2021 20:06</span>
<span style="position:absolute;left:712px;top:252.00px;font-size:18px;line-height:1;letter-spacing:-0.136px;color:#f2f2f2;white-space:pre;">Dateiordner</span>
<div style="position:absolute;left:22px;top:276px;width:1011px;height:31px;background:#626262;"></div>
<svg style="position:absolute;left:30px;top:281px;" width="15" height="22" viewBox="0 0 15 22"><path d="M1 0.8H12.8V10.6L14 11.8V17.7H4.2Z" fill="url(#rf)"/><path d="M0.8 1L4.8 4.1L4.4 20.8L0.8 18.3Z" fill="#fdeaa8"/></svg>
<span style="position:absolute;left:57.3px;top:284.00px;font-size:18px;line-height:1;letter-spacing:-0.365px;color:#f2f2f2;white-space:pre;">TCD5252.tmp</span>
<span style="position:absolute;left:468.3px;top:284.00px;font-size:18px;line-height:1;letter-spacing:-0.276px;color:#f2f2f2;white-space:pre;">27.03.2021 20:06</span>
<span style="position:absolute;left:712px;top:284.00px;font-size:18px;line-height:1;letter-spacing:-0.136px;color:#f2f2f2;white-space:pre;">Dateiordner</span>
<div style="position:absolute;left:22px;top:308px;width:1011px;height:31px;background:#626262;"></div>
<svg style="position:absolute;left:30px;top:313px;" width="15" height="22" viewBox="0 0 15 22"><path d="M1 0.8H12.8V10.6L14 11.8V17.7H4.2Z" fill="url(#rf)"/><path d="M0.8 1L4.8 4.1L4.4 20.8L0.8 18.3Z" fill="#fdeaa8"/></svg>
<span style="position:absolute;left:57.3px;top:316.00px;font-size:18px;line-height:1;letter-spacing:-0.365px;color:#f2f2f2;white-space:pre;">TCD5253.tmp</span>
<span style="position:absolute;left:468.3px;top:316.00px;font-size:18px;line-height:1;letter-spacing:-0.276px;color:#f2f2f2;white-space:pre;">27.03.2021 20:06</span>
<span style="position:absolute;left:712px;top:316.00px;font-size:18px;line-height:1;letter-spacing:-0.136px;color:#f2f2f2;white-space:pre;">Dateiordner</span>
<div style="position:absolute;left:22px;top:340px;width:1011px;height:31px;background:#777777;"></div>
<svg style="position:absolute;left:30px;top:345px;" width="15" height="22" viewBox="0 0 15 22"><path d="M1 0.8H12.8V10.6L14 11.8V17.7H4.2Z" fill="url(#rf)"/><path d="M0.8 1L4.8 4.1L4.4 20.8L0.8 18.3Z" fill="#fdeaa8"/></svg>
<span style="position:absolute;left:57.3px;top:348.00px;font-size:18px;line-height:1;letter-spacing:-0.365px;color:#f2f2f2;white-space:pre;">TCD5254.tmp</span>
<span style="position:absolute;left:468.3px;top:348.00px;font-size:18px;line-height:1;letter-spacing:-0.276px;color:#f2f2f2;white-space:pre;">27.03.2021 20:06</span>
<span style="position:absolute;left:712px;top:348.00px;font-size:18px;line-height:1;letter-spacing:-0.136px;color:#f2f2f2;white-space:pre;">Dateiordner</span>
<div style="position:absolute;left:22px;top:372px;width:1011px;height:31px;background:#626262;"></div>
<svg style="position:absolute;left:30px;top:377px;" width="15" height="22" viewBox="0 0 15 22"><path d="M1 0.8H12.8V10.6L14 11.8V17.7H4.2Z" fill="url(#rf)"/><path d="M0.8 1L4.8 4.1L4.4 20.8L0.8 18.3Z" fill="#fdeaa8"/></svg>
<span style="position:absolute;left:57.3px;top:380.00px;font-size:18px;line-height:1;letter-spacing:-0.365px;color:#f2f2f2;white-space:pre;">TCD5264.tmp</span>
<span style="position:absolute;left:468.3px;top:380.00px;font-size:18px;line-height:1;letter-spacing:-0.276px;color:#f2f2f2;white-space:pre;">27.03.2021 20:06</span>
<span style="position:absolute;left:712px;top:380.00px;font-size:18px;line-height:1;letter-spacing:-0.136px;color:#f2f2f2;white-space:pre;">Dateiordner</span>
<div style="position:absolute;left:22px;top:404px;width:1011px;height:31px;background:#626262;"></div>
<svg style="position:absolute;left:30px;top:409px;" width="15" height="22" viewBox="0 0 15 22"><path d="M1 0.8H12.8V10.6L14 11.8V17.7H4.2Z" fill="url(#rf)"/><path d="M0.8 1L4.8 4.1L4.4 20.8L0.8 18.3Z" fill="#fdeaa8"/></svg>
<span style="position:absolute;left:57.3px;top:412.00px;font-size:18px;line-height:1;letter-spacing:-0.365px;color:#f2f2f2;white-space:pre;">TCD5265.tmp</span>
<span style="position:absolute;left:468.3px;top:412.00px;font-size:18px;line-height:1;letter-spacing:-0.276px;color:#f2f2f2;white-space:pre;">27.03.2021 20:06</span>
<span style="position:absolute;left:712px;top:412.00px;font-size:18px;line-height:1;letter-spacing:-0.136px;color:#f2f2f2;white-space:pre;">Dateiordner</span>
<div style="position:absolute;left:22px;top:436px;width:1011px;height:31px;background:#626262;"></div>
<svg style="position:absolute;left:30px;top:441px;" width="15" height="22" viewBox="0 0 15 22"><path d="M1 0.8H12.8V10.6L14 11.8V17.7H4.2Z" fill="url(#rf)"/><path d="M0.8 1L4.8 4.1L4.4 20.8L0.8 18.3Z" fill="#fdeaa8"/></svg>
<span style="position:absolute;left:57.3px;top:444.00px;font-size:18px;line-height:1;letter-spacing:-0.365px;color:#f2f2f2;white-space:pre;">TCD5808.tmp</span>
<span style="position:absolute;left:468.3px;top:444.00px;font-size:18px;line-height:1;letter-spacing:-0.276px;color:#f2f2f2;white-space:pre;">26.08.2021 13:48</span>
<span style="position:absolute;left:712px;top:444.00px;font-size:18px;line-height:1;letter-spacing:-0.136px;color:#f2f2f2;white-space:pre;">Dateiordner</span>
<div style="position:absolute;left:22px;top:468px;width:1011px;height:31px;background:#626262;"></div>
<svg style="position:absolute;left:30px;top:473px;" width="15" height="22" viewBox="0 0 15 22"><path d="M1 0.8H12.8V10.6L14 11.8V17.7H4.2Z" fill="url(#rf)"/><path d="M0.8 1L4.8 4.1L4.4 20.8L0.8 18.3Z" fill="#fdeaa8"/></svg>
<span style="position:absolute;left:57.3px;top:476.00px;font-size:18px;line-height:1;letter-spacing:-0.365px;color:#f2f2f2;white-space:pre;">TCD5848.tmp</span>
<span style="position:absolute;left:468.3px;top:476.00px;font-size:18px;line-height:1;letter-spacing:-0.276px;color:#f2f2f2;white-space:pre;">26.08.2021 13:48</span>
<span style="position:absolute;left:712px;top:476.00px;font-size:18px;line-height:1;letter-spacing:-0.136px;color:#f2f2f2;white-space:pre;">Dateiordner</span>
<div style="position:absolute;left:22px;top:500px;width:1011px;height:31px;background:#626262;"></div>
<svg style="position:absolute;left:30px;top:505px;" width="15" height="22" viewBox="0 0 15 22"><path d="M1 0.8H12.8V10.6L14 11.8V17.7H4.2Z" fill="url(#rf)"/><path d="M0.8 1L4.8 4.1L4.4 20.8L0.8 18.3Z" fill="#fdeaa8"/></svg>
<span style="position:absolute;left:57.3px;top:508.00px;font-size:18px;line-height:1;letter-spacing:-0.705px;color:#f2f2f2;white-space:pre;">TCDA2E6.tmp</span>
<span style="position:absolute;left:468.3px;top:508.00px;font-size:18px;line-height:1;letter-spacing:-0.186px;color:#f2f2f2;white-space:pre;">11.06.2021 20:05</span>
<span style="position:absolute;left:712px;top:508.00px;font-size:18px;line-height:1;letter-spacing:-0.136px;color:#f2f2f2;white-space:pre;">Dateiordner</span>
<div style="position:absolute;left:22px;top:532px;width:1011px;height:31px;background:#626262;"></div>
<svg style="position:absolute;left:30px;top:537px;" width="15" height="22" viewBox="0 0 15 22"><path d="M1 0.8H12.8V10.6L14 11.8V17.7H4.2Z" fill="url(#rf)"/><path d="M0.8 1L4.8 4.1L4.4 20.8L0.8 18.3Z" fill="#fdeaa8"/></svg>
<span style="position:absolute;left:57.3px;top:540.00px;font-size:18px;line-height:1;letter-spacing:-0.705px;color:#f2f2f2;white-space:pre;">TCDA2E7.tmp</span>
<span style="position:absolute;left:468.3px;top:540.00px;font-size:18px;line-height:1;letter-spacing:-0.186px;color:#f2f2f2;white-space:pre;">11.06.2021 20:05</span>
<span style="position:absolute;left:712px;top:540.00px;font-size:18px;line-height:1;letter-spacing:-0.136px;color:#f2f2f2;white-space:pre;">Dateiordner</span>
<div style="position:absolute;left:22px;top:564px;width:1011px;height:31px;background:#626262;"></div>
<svg style="position:absolute;left:30px;top:569px;" width="15" height="22" viewBox="0 0 15 22"><path d="M1 0.8H12.8V10.6L14 11.8V17.7H4.2Z" fill="url(#rf)"/><path d="M0.8 1L4.8 4.1L4.4 20.8L0.8 18.3Z" fill="#fdeaa8"/></svg>
<span style="position:absolute;left:57.3px;top:572.00px;font-size:18px;line-height:1;letter-spacing:-0.705px;color:#f2f2f2;white-space:pre;">TCDA2E8.tmp</span>
<span style="position:absolute;left:468.3px;top:572.00px;font-size:18px;line-height:1;letter-spacing:-0.186px;color:#f2f2f2;white-space:pre;">11.06.2021 20:05</span>
<span style="position:absolute;left:712px;top:572.00px;font-size:18px;line-height:1;letter-spacing:-0.136px;color:#f2f2f2;white-space:pre;">Dateiordner</span>
<div style="position:absolute;left:22px;top:596px;width:1011px;height:31px;background:#626262;"></div>
<svg style="position:absolute;left:30px;top:601px;" width="15" height="22" viewBox="0 0 15 22"><path d="M1 0.8H12.8V10.6L14 11.8V17.7H4.2Z" fill="url(#rf)"/><path d="M0.8 1L4.8 4.1L4.4 20.8L0.8 18.3Z" fill="#fdeaa8"/></svg>
<span style="position:absolute;left:57.3px;top:604.00px;font-size:18px;line-height:1;letter-spacing:-0.705px;color:#f2f2f2;white-space:pre;">TCDA2E9.tmp</span>
<span style="position:absolute;left:468.3px;top:604.00px;font-size:18px;line-height:1;letter-spacing:-0.186px;color:#f2f2f2;white-space:pre;">11.06.2021 20:05</span>
<span style="position:absolute;left:712px;top:604.00px;font-size:18px;line-height:1;letter-spacing:-0.136px;color:#f2f2f2;white-space:pre;">Dateiordner</span>
<div style="position:absolute;left:22px;top:628px;width:1011px;height:31px;background:#626262;"></div>
<svg style="position:absolute;left:30px;top:633px;" width="15" height="22" viewBox="0 0 15 22"><path d="M1 0.8H12.8V10.6L14 11.8V17.7H4.2Z" fill="url(#rf)"/><path d="M0.8 1L4.8 4.1L4.4 20.8L0.8 18.3Z" fill="#fdeaa8"/></svg>
<span style="position:absolute;left:57.3px;top:636.00px;font-size:18px;line-height:1;letter-spacing:-0.703px;color:#f2f2f2;white-space:pre;">TCDA2EA.tmp</span>
<span style="position:absolute;left:468.3px;top:636.00px;font-size:18px;line-height:1;letter-spacing:-0.186px;color:#f2f2f2;white-space:pre;">11.06.2021 20:05</span>
<span style="position:absolute;left:712px;top:636.00px;font-size:18px;line-height:1;letter-spacing:-0.136px;color:#f2f2f2;white-space:pre;">Dateiordner</span>
<div style="position:absolute;left:22px;top:660px;width:1011px;height:31px;background:#626262;"></div>
<svg style="position:absolute;left:30px;top:665px;" width="15" height="22" viewBox="0 0 15 22"><path d="M1 0.8H12.8V10.6L14 11.8V17.7H4.2Z" fill="url(#rf)"/><path d="M0.8 1L4.8 4.1L4.4 20.8L0.8 18.3Z" fill="#fdeaa8"/></svg>
<span style="position:absolute;left:57.3px;top:668.00px;font-size:18px;line-height:1;letter-spacing:-0.350px;color:#f2f2f2;white-space:pre;transform:scaleX(0.9517);transform-origin:0 0;">TCDA2EB.tmp</span>
<span style="position:absolute;left:468.3px;top:668.00px;font-size:18px;line-height:1;letter-spacing:-0.186px;color:#f2f2f2;white-space:pre;">11.06.2021 20:05</span>
<span style="position:absolute;left:712px;top:668.00px;font-size:18px;line-height:1;letter-spacing:-0.136px;color:#f2f2f2;white-space:pre;">Dateiordner</span>
</div>
<div style="position:absolute;left:1895px;top:633px;width:24px;height:56px;background:#4d4d4d;"></div>
<span style="position:absolute;left:22px;top:1009.00px;font-size:18px;line-height:1;letter-spacing:-0.462px;color:#e6e6e6;white-space:pre;">260 Elemente</span>
<span style="position:absolute;left:163px;top:1009.00px;font-size:18px;line-height:1;letter-spacing:-0.279px;color:#e6e6e6;white-space:pre;">260 Elemente ausgewählt</span>
<div style="position:absolute;left:145px;top:1008px;width:2px;height:16px;background:#fff;"></div>
<div style="position:absolute;left:380px;top:1008px;width:2px;height:16px;background:#fff;"></div>
<div style="position:absolute;left:1846px;top:999px;width:33px;height:35px;background:#686868;box-sizing:border-box;border:1px solid #a2a2a2;"></div>
<svg style="position:absolute;left:0;top:0" width="1920" height="1040"><rect x="1853" y="1007" width="6" height="21" fill="#fff"/><rect x="1854.6" y="1008.6" width="2.8" height="2.8" fill="#3b5a78"/><rect x="1854.6" y="1013.7" width="2.8" height="2.8" fill="#7a7a3a"/><rect x="1854.6" y="1018.8" width="2.8" height="2.8" fill="#7a2222"/><rect x="1854.6" y="1023.9" width="2.8" height="2.8" fill="#8aa27a"/><path d="M1860 1009.50H1866M1868 1009.50H1874" stroke="#7e7e7e" stroke-width="1"/><path d="M1860 1014.55H1866M1868 1014.55H1874" stroke="#7e7e7e" stroke-width="1"/><path d="M1860 1019.60H1866M1868 1019.60H1874" stroke="#7e7e7e" stroke-width="1"/><path d="M1860 1024.65H1866M1868 1024.65H1874" stroke="#7e7e7e" stroke-width="1"/><defs><linearGradient id="sky" x1="0" y1="0" x2="0" y2="1"><stop offset="0" stop-color="#3f7fd6"/><stop offset="0.5" stop-color="#c9e2f5"/><stop offset="0.62" stop-color="#2f6a5a"/><stop offset="0.75" stop-color="#2d6aa5"/><stop offset="1" stop-color="#7fb3d9"/></linearGradient></defs><rect x="1885" y="1008" width="22" height="16" fill="#fff"/><rect x="1887.2" y="1010" width="17.6" height="12" fill="url(#sky)"/><path d="M1887.2 1015.5C1890 1014 1893 1015.5 1896 1017C1899 1018 1902 1018.3 1904.8 1018.5V1019.3H1887.2Z" fill="#2c5d4c"/><path d="M1907.4 275.9L1913 281.4V285.2L1907.4 280L1901.9 285.2V281.4Z" fill="#868686"/><path d="M1907.4 991.1L1913 985.6V981.8L1907.4 987L1901.9 981.8V985.6Z" fill="#868686"/><path d="M232.2 272.8L237.5 267.6L242.8 272.8" fill="none" stroke="#c8c8c8" stroke-width="1"/></svg>
<div style="position:absolute;left:278px;top:1034px;width:48px;height:46px;background:#4f5d64;"></div>
<div style="position:absolute;left:328px;top:1034px;width:5px;height:46px;background:#39474e;"></div>
<div style="position:absolute;left:278px;top:1077px;width:48px;height:3px;background:#b4b8ba;"></div>
<div style="position:absolute;left:328px;top:1077px;width:5px;height:3px;background:#8a9093;"></div>
<div style="position:absolute;left:455px;top:1077px;width:43px;height:3px;background:#a9aeb0;"></div>
<div style="position:absolute;left:512px;top:1077px;width:43px;height:3px;background:#a9aeb0;"></div>
<div style="position:absolute;left:569px;top:1077px;width:43px;height:3px;background:#a9aeb0;"></div>
<div style="position:absolute;left:1912px;top:1034px;width:2px;height:46px;background:#8c9ba1;"></div>
<svg style="position:absolute;left:0;top:0" width="1920" height="1080"><path d="M14.8 1048L24.9 1046.6V1056H14.8Z M26.1 1046.4L39.3 1044.5V1056H26.1Z M14.8 1057.2H24.9V1066.8L14.8 1065.4Z M26.1 1057.2H39.3V1069L26.1 1067Z" fill="#fff"/><circle cx="84.6" cy="1053.7" r="8.2" fill="none" stroke="#fff" stroke-width="1.5"/><path d="M78.8 1059.6L69.5 1068.7" stroke="#fff" stroke-width="1.6"/><circle cx="134.9" cy="1057" r="10.1" fill="none" stroke="#fff" stroke-width="3.3"/><rect x="177.6" y="1051.8" width="15" height="10" fill="none" stroke="#fff" stroke-width="1.3"/><path d="M177.6 1045.2V1048.4H192.6V1045.2M177.6 1068.2V1065H192.6V1068.2" fill="none" stroke="#fff" stroke-width="1.3"/><path d="M199.5 1045V1068.2" stroke="#fff" stroke-width="1.2"/><rect x="198.2" y="1051.6" width="2.6" height="3.2" fill="#fff"/><path d="M238.30 1050.56A11.4 11.4 0 0 1 258.02 1051.46L247.90 1051.46A5.24 5.24 0 0 0 243.36 1059.32Z" fill="#e24a3a"/><path d="M247.38 1068.09A11.4 11.4 0 0 1 238.30 1050.56L243.36 1059.32A5.24 5.24 0 0 0 252.44 1059.32Z" fill="#2aa34f"/><path d="M258.02 1051.46A11.4 11.4 0 0 1 247.38 1068.09L252.44 1059.32A5.24 5.24 0 0 0 247.90 1051.46Z" fill="#fbc21b"/><circle cx="247.9" cy="1056.7" r="5.24" fill="#f4f4f4"/><circle cx="247.9" cy="1056.7" r="4.10" fill="#4587f0"/><path d="M293.2 1048.3H301L303 1050.3H316.2V1065.6H293.2Z" fill="#fbd65f"/><path d="M293.2 1048.3H301L303 1050.3H293.2Z" fill="#eab22a"/><path d="M293.2 1051.6H316.2V1053H293.2Z" fill="#ffe488"/><path d="M297.6 1066.2V1059.6C297.6 1058.6 298.4 1058 299.4 1058H310C311 1058 311.8 1058.6 311.8 1059.6V1066.2H308V1061.4H301.4V1066.2Z" fill="#3c9ae8"/><defs><linearGradient id="ml" x1="0" y1="0" x2="1" y2="1"><stop offset="0" stop-color="#1b8fe0"/><stop offset="1" stop-color="#35c0f4"/></linearGradient><linearGradient id="eg" x1="0" y1="1" x2="1" y2="0"><stop offset="0" stop-color="#0b55a8"/><stop offset="0.5" stop-color="#1a9be6"/><stop offset="1" stop-color="#62dc6c"/></linearGradient><radialGradient id="sun" cx="0.4" cy="0.35" r="0.75"><stop offset="0" stop-color="#ffd84a"/><stop offset="0.6" stop-color="#ffb92e"/><stop offset="1" stop-color="#f79a1e"/></radialGradient><linearGradient id="np" x1="0.45" y1="0" x2="0.2" y2="1"><stop offset="0" stop-color="#f2fafc"/><stop offset="0.45" stop-color="#9fd2e0"/><stop offset="1" stop-color="#3f9db8"/></linearGradient></defs><path d="M349.3 1052.6L361.5 1046L373.8 1052.6V1056H349.3Z" fill="#1160bd"/><path d="M351.8 1053.6H371.4L361.6 1060.2Z" fill="#f4f6f8"/><path d="M349.3 1053L361.6 1061.4L373.8 1053V1067.8H349.3Z" fill="url(#ml)"/><path d="M361.6 1061.4L373.8 1053V1067.8Z" fill="#2fb6f2" opacity="0.7"/><defs><linearGradient id="eb" x1="0" y1="0" x2="0.6" y2="1"><stop offset="0" stop-color="#2aa8ea"/><stop offset="1" stop-color="#0b6bc6"/></linearGradient><linearGradient id="ec" x1="0" y1="0" x2="1" y2="0.35"><stop offset="0" stop-color="#3db9f4"/><stop offset="0.5" stop-color="#2fc3cf"/><stop offset="0.85" stop-color="#5cdc72"/><stop offset="1" stop-color="#7fe07a"/></linearGradient></defs><circle cx="419" cy="1056.9" r="12.2" fill="url(#eb)"/><path d="M414.3 1058.2C414.3 1054.6 417.8 1052.8 420.4 1054.6C417.6 1056 417.8 1060.6 421.5 1062.4C424.5 1063.7 428 1063.1 430 1061.4C428.6 1066 423.6 1069.2 418.4 1068.9C415.4 1065.8 414.3 1061.6 414.3 1058.2Z" fill="#1456a2"/><path d="M406.9 1054.6A12.2 12.2 0 0 1 431.2 1056C431.2 1059.2 429.4 1061.3 426 1061.3H421.8C420.2 1061.1 420.2 1059.8 421 1058.7C422.6 1056.4 420.6 1052.8 416.6 1052.2C412.9 1051.7 409.2 1052.7 406.9 1054.6Z" fill="url(#ec)"/><ellipse cx="419.2" cy="1057.4" rx="2.2" ry="2.3" fill="#25363d"/><circle cx="475.9" cy="1057" r="11.3" fill="#1ed760"/><path d="M469 1052.8C473.8 1051.3 479.4 1051.8 483.6 1054.2" fill="none" stroke="#10240f" stroke-width="1.9" stroke-linecap="round"/><path d="M469.8 1057C474 1055.8 478.6 1056.2 482.4 1058.3" fill="none" stroke="#10240f" stroke-width="1.6" stroke-linecap="round"/><path d="M470.6 1060.9C474 1060 477.7 1060.3 480.9 1062" fill="none" stroke="#10240f" stroke-width="1.3" stroke-linecap="round"/><path d="M542.3 1048.8L544.2 1053.2L544 1062L542 1064.5Z" fill="#8b6a2a"/><path d="M541.7 1048.2L542 1063.9L538.9 1067.1L534.5 1064.9Z" fill="#e6edf1"/><path d="M529.1 1046L541.7 1048.2L534.5 1064.9L521.1 1061.4Z" fill="url(#np)"/><path d="M529.1 1046L541.7 1048.2L541 1049.8L528.4 1047.6Z" fill="#dfe7ea"/><path d="M521.1 1061.4L534.5 1064.9L534.1 1065.8L520.8 1062.2Z" fill="#dff0f6"/><path d="M580.45 1050.92A11.1 11.1 0 0 1 599.66 1051.79L589.80 1051.79A5.11 5.11 0 0 0 585.38 1059.45Z" fill="#e24a3a"/><path d="M589.29 1067.99A11.1 11.1 0 0 1 580.45 1050.92L585.38 1059.45A5.11 5.11 0 0 0 594.22 1059.45Z" fill="#2aa34f"/><path d="M599.66 1051.79A11.1 11.1 0 0 1 589.29 1067.99L594.22 1059.45A5.11 5.11 0 0 0 589.80 1051.79Z" fill="#fbc21b"/><circle cx="589.8" cy="1056.9" r="5.11" fill="#f4f4f4"/><circle cx="589.8" cy="1056.9" r="4.00" fill="#4587f0"/><circle cx="596.3" cy="1063.3" r="5.8" fill="#8d6e63"/><path d="M594 1066.2L596.3 1060.4L598.6 1066.2M594.9 1064.4H597.7" fill="none" stroke="#e8e0dc" stroke-width="1"/><circle cx="1382.6" cy="1056.8" r="14.2" fill="url(#sun)"/><path d="M1551.3 1060.6L1560 1052L1568.7 1060.6" fill="none" stroke="#fff" stroke-width="1.3"/><rect x="1589.2" y="1051.6" width="10" height="10.4" rx="2" fill="none" stroke="#fff" stroke-width="1.2"/><path d="M1599.4 1055.6L1604.4 1052.8V1060.8L1599.4 1058" fill="none" stroke="#fff" stroke-width="1.2"/><path d="M1589.6 1048.4C1592 1045.4 1599.6 1045.4 1602 1048.4M1589.6 1065.4C1592 1068.2 1599.6 1068.2 1602 1065.4" fill="none" stroke="#fff" stroke-width="1.1"/><path d="M1624 1064C1619.6 1064 1618.4 1058.6 1622 1057C1621.6 1052.6 1626.6 1050.6 1628.6 1053.4C1630.6 1047.4 1638.6 1048.4 1638.8 1054.6C1641.6 1055.4 1641.8 1059.6 1639.6 1061V1064Z" fill="#c4c7cb"/><path d="M1624 1064C1619.6 1064 1618.4 1058.6 1622 1057C1624.4 1056 1626.8 1057 1627.8 1058.8L1634 1064Z" fill="#eceef0"/><rect x="1629.8" y="1055.4" width="14" height="13.8" rx="5.2" fill="#d9182d"/><path d="M1634 1059.4L1639.8 1065.2M1639.8 1059.4L1634 1065.2" stroke="#fff" stroke-width="1.7"/><path d="M1662.4 1048.8H1679.6V1062.2H1659.4" fill="none" stroke="#fff" stroke-width="1.3"/><rect x="1656.6" y="1048.8" width="5.6" height="6.8" fill="none" stroke="#fff" stroke-width="1.2"/><path d="M1657 1051.2H1660.6" stroke="#fff" stroke-width="1"/><path d="M1659.4 1055.6V1065.8" stroke="#fff" stroke-width="1.2"/><path d="M1668.6 1062.2V1065.2M1663.8 1065.4H1673.2" stroke="#fff" stroke-width="1.3"/><path d="M1693.4 1054.4H1697L1701.8 1049.6V1065.2L1697 1060.4H1693.4Z" fill="none" stroke="#fff" stroke-width="1.2" stroke-linejoin="round"/><path d="M1704.6 1054.4C1706 1056 1706 1058.8 1704.6 1060.4M1707.6 1051.8C1710.4 1055 1710.4 1059.8 1707.6 1063M1710.8 1049.2C1715 1054 1715 1060.8 1710.8 1065.6" fill="none" stroke="#fff" stroke-width="1.2"/><path d="M1858.4 1045.4H1881.4V1062.6H1872.4L1869.9 1067.6L1867.4 1062.6H1858.4Z" fill="#fff"/><path d="M1863 1050.5H1877M1863 1054H1877M1863 1057.5H1872" stroke="#21313a" stroke-width="1.1"/></svg>
<span style="position:absolute;left:1414.6px;top:1049.00px;font-size:21px;line-height:1;letter-spacing:-0.408px;color:#fff;white-space:pre;transform:scaleX(0.9060);transform-origin:0 0;">16°C</span>
<span style="position:absolute;left:1469.6px;top:1049.00px;font-size:21px;line-height:1;letter-spacing:-0.498px;color:#fff;white-space:pre;">Sonnig</span>
<span style="position:absolute;left:1732.7px;top:1048.00px;font-size:18px;line-height:1;letter-spacing:-0.350px;color:#fff;white-space:pre;transform:scaleX(0.8656);transform-origin:0 0;">DEU</span>
<span style="position:absolute;left:1787px;top:1048.00px;font-size:18px;line-height:1;letter-spacing:-0.762px;color:#fff;white-space:pre;">19:30</span>
<div style="position:absolute;left:943px;top:111px;width:562px;height:562px;background:#2b2b2b;box-sizing:border-box;border:1px solid #a0a0a0;box-shadow:3px 3px 6px rgba(0,0,0,.5);"></div>
<div style="position:absolute;left:946px;top:557px;width:556px;height:33px;background:#414141;"></div>
<span style="position:absolute;left:994.4px;top:126.00px;font-size:18px;line-height:1;letter-spacing:0.003px;color:#fff;white-space:pre;font-weight:700;">An Schnellzugriff anheften</span>
<span style="position:absolute;left:994.4px;top:159.00px;font-size:18px;line-height:1;letter-spacing:0.028px;color:#fff;white-space:pre;">Mit Microsoft Defender überprüfen...</span>
<span style="position:absolute;left:994.4px;top:203.00px;font-size:18px;line-height:1;letter-spacing:-0.010px;color:#fff;white-space:pre;">Zugriff gewähren auf</span>
<span style="position:absolute;left:994.4px;top:236.00px;font-size:18px;line-height:1;letter-spacing:-0.113px;color:#fff;white-space:pre;">Suchlauf mit Malwarebytes durchführen</span>
<span style="position:absolute;left:994.4px;top:269.00px;font-size:18px;line-height:1;letter-spacing:-0.183px;color:#fff;white-space:pre;">Zum Archiv hinzufügen...</span>
<span style="position:absolute;left:994.4px;top:302.00px;font-size:18px;line-height:1;letter-spacing:-0.152px;color:#fff;white-space:pre;">Zu "Temp.rar" hinzufügen</span>
<span style="position:absolute;left:994.4px;top:335.00px;font-size:18px;line-height:1;letter-spacing:-0.477px;color:#fff;white-space:pre;">Packen und als E-Mail versenden...</span>
<span style="position:absolute;left:994.4px;top:368.00px;font-size:18px;line-height:1;letter-spacing:-0.204px;color:#fff;white-space:pre;">Zu "Temp.rar" hinzufügen und als E-Mail versenden</span>
<span style="position:absolute;left:994.4px;top:412.00px;font-size:18px;line-height:1;letter-spacing:-0.612px;color:#fff;white-space:pre;">Senden an</span>
<span style="position:absolute;left:994.4px;top:456.00px;font-size:18px;line-height:1;letter-spacing:-0.454px;color:#fff;white-space:pre;">Ausschneiden</span>
<span style="position:absolute;left:994.4px;top:489.00px;font-size:18px;line-height:1;letter-spacing:-0.366px;color:#fff;white-space:pre;">Kopieren</span>
<span style="position:absolute;left:994.4px;top:533.00px;font-size:18px;line-height:1;letter-spacing:-0.141px;color:#fff;white-space:pre;">Verknüpfung erstellen</span>
<span style="position:absolute;left:994.4px;top:566.00px;font-size:18px;line-height:1;letter-spacing:-0.777px;color:#fff;white-space:pre;">Löschen</span>
<span style="position:absolute;left:994.4px;top:599.00px;font-size:18px;line-height:1;letter-spacing:-0.333px;color:#fff;white-space:pre;">Umbenennen</span>
<span style="position:absolute;left:994.4px;top:643.00px;font-size:18px;line-height:1;letter-spacing:-0.499px;color:#fff;white-space:pre;">Eigenschaften</span>
<div style="position:absolute;left:958px;top:188px;width:532px;height:1px;background:#8f8f8f;"></div>
<div style="position:absolute;left:958px;top:397px;width:532px;height:1px;background:#8f8f8f;"></div>
<div style="position:absolute;left:958px;top:441px;width:532px;height:1px;background:#8f8f8f;"></div>
<div style="position:absolute;left:958px;top:518px;width:532px;height:1px;background:#8f8f8f;"></div>
<div style="position:absolute;left:958px;top:628px;width:532px;height:1px;background:#8f8f8f;"></div>
<svg style="position:absolute;left:0;top:0" width="1920" height="700"><rect x="962" y="158" width="16" height="16" fill="#0f78d4"/><path d="M963.2 160.6C966 160.6 968 159.6 970 158.8C972 159.6 974 160.6 976.8 160.6V166C976.8 169.5 973.5 172 970 173.6C966.5 172 963.2 169.5 963.2 166Z" fill="#f2fbff"/><path d="M970 158V174M962.5 165.4H977.5" stroke="#1a6fbf" stroke-width="1"/><path d="M964.9 237.1L969.4 241.2L973.9 237.1C976 238.5 977.1 241 976.5 243.6C976 245.6 974.8 247.3 973.2 248.3C973.5 246.8 973.2 245.3 972.3 244.2L969.4 246.5L966.6 244.2C965.6 245.8 965.8 248 966.7 249.8C964.2 248.4 962.3 245.8 961.9 243C961.6 240.6 962.8 238.4 964.9 237.1Z" fill="#2467b2"/><rect x="962" y="267.9" width="16" height="4.9" fill="#d0215f"/><rect x="962.6" y="268.9" width="1.2" height="3" fill="#f3d27a"/><rect x="962" y="273.0" width="16" height="4.9" fill="#5a52ba"/><rect x="962.6" y="274.0" width="1.2" height="3" fill="#f3d27a"/><rect x="962" y="278.1" width="16" height="4.9" fill="#1e9a3d"/><rect x="962.6" y="279.1" width="1.2" height="3" fill="#f3d27a"/><rect x="967.8" y="267.9" width="4.2" height="15.2" fill="#ea7a1c"/><rect x="966.8" y="273.5" width="6.2" height="4" fill="#fff"/><rect x="968.6" y="274.9" width="2.6" height="2.6" fill="#e8892f"/><rect x="962" y="300.9" width="16" height="4.9" fill="#d0215f"/><rect x="962.6" y="301.9" width="1.2" height="3" fill="#f3d27a"/><rect x="962" y="306.0" width="16" height="4.9" fill="#5a52ba"/><rect x="962.6" y="307.0" width="1.2" height="3" fill="#f3d27a"/><rect x="962" y="311.1" width="16" height="4.9" fill="#1e9a3d"/><rect x="962.6" y="312.1" width="1.2" height="3" fill="#f3d27a"/><rect x="967.8" y="300.9" width="4.2" height="15.2" fill="#ea7a1c"/><rect x="966.8" y="306.5" width="6.2" height="4" fill="#fff"/><rect x="968.6" y="307.9" width="2.6" height="2.6" fill="#e8892f"/><rect x="962" y="333.9" width="16" height="4.9" fill="#d0215f"/><rect x="962.6" y="334.9" width="1.2" height="3" fill="#f3d27a"/><rect x="962" y="339.0" width="16" height="4.9" fill="#5a52ba"/><rect x="962.6" y="340.0" width="1.2" height="3" fill="#f3d27a"/><rect x="962" y="344.1" width="16" height="4.9" fill="#1e9a3d"/><rect x="962.6" y="345.1" width="1.2" height="3" fill="#f3d27a"/><rect x="967.8" y="333.9" width="4.2" height="15.2" fill="#ea7a1c"/><rect x="966.8" y="339.5" width="6.2" height="4" fill="#fff"/><rect x="968.6" y="340.9" width="2.6" height="2.6" fill="#e8892f"/><rect x="962" y="366.9" width="16" height="4.9" fill="#d0215f"/><rect x="962.6" y="367.9" width="1.2" height="3" fill="#f3d27a"/><rect x="962" y="372.0" width="16" height="4.9" fill="#5a52ba"/><rect x="962.6" y="373.0" width="1.2" height="3" fill="#f3d27a"/><rect x="962" y="377.1" width="16" height="4.9" fill="#1e9a3d"/><rect x="962.6" y="378.1" width="1.2" height="3" fill="#f3d27a"/><rect x="967.8" y="366.9" width="4.2" height="15.2" fill="#ea7a1c"/><rect x="966.8" y="372.5" width="6.2" height="4" fill="#fff"/><rect x="968.6" y="373.9" width="2.6" height="2.6" fill="#e8892f"/><path d="M1479.3 201.2L1488.8 210.5L1479.3 219.8" fill="none" stroke="#fff" stroke-width="1.4"/><path d="M1479.3 410.2L1488.8 419.5L1479.3 428.8" fill="none" stroke="#fff" stroke-width="1.4"/></svg>
</body></html>
